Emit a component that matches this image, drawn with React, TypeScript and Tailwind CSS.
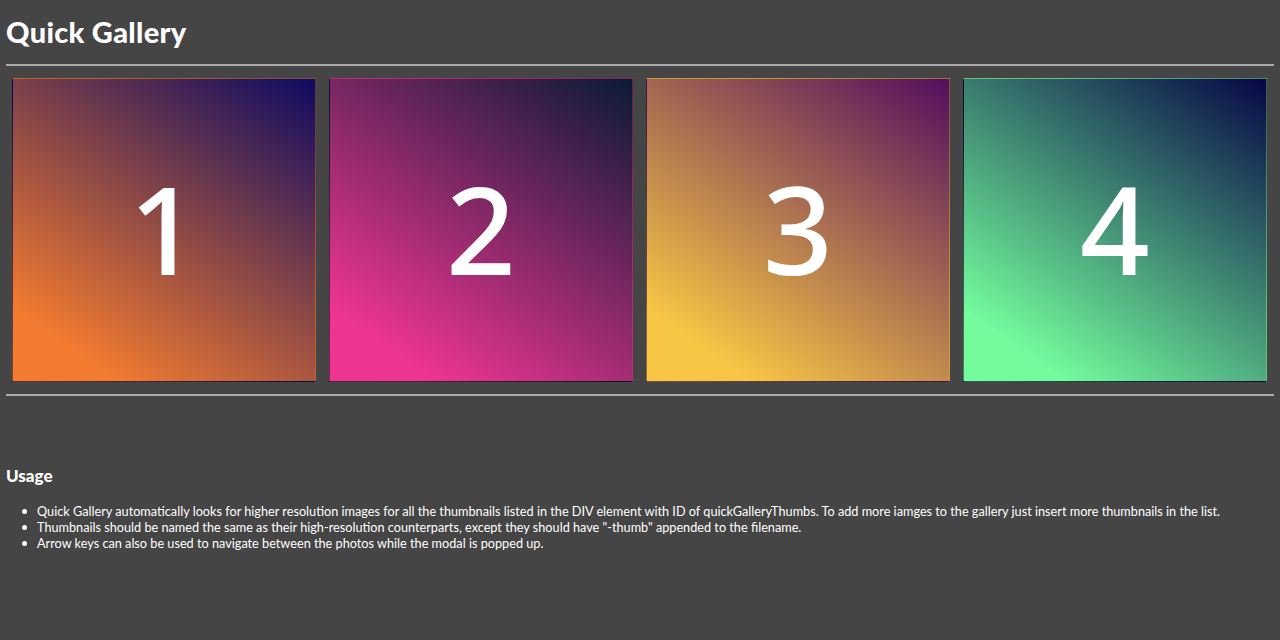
import React from "react";

const tiles = [
  { n: "1", bg: "linear-gradient(35deg, #f27b30 14%, #0e0a62 100%)" },
  { n: "2", bg: "linear-gradient(35deg, #ee3590 14%, #0a1a36 100%)" },
  { n: "3", bg: "linear-gradient(35deg, #f7c645 14%, #530e5e 100%)" },
  { n: "4", bg: "linear-gradient(35deg, #73fb9c 14%, #060645 100%)" },
];

const items = [
  "Quick Gallery automatically looks for higher resolution images for all the thumbnails listed in the DIV element with ID of quickGalleryThumbs. To add more iamges to the gallery just insert more thumbnails in the list.",
  'Thumbnails should be named the same as their high-resolution counterparts, except they should have "-thumb" appended to the filename.',
  "Arrow keys can also be used to navigate between the photos while the modal is popped up.",
];

export default function App() {
  return (
    <div className="min-h-[640px] w-full bg-[#454545] px-[6px] pt-[14px] text-white" style={{ fontFamily: 'Lato, "Noto Sans", sans-serif' }}>
      <h1 className="text-[29px] font-black leading-[36px] tracking-[0.3px]">Quick Gallery</h1>
      <div className="mt-[14px] h-[2px] w-full bg-[#ababab]" />
      <div className="flex gap-[13px] px-[6px] pt-[12px] pb-[12px]">
        {tiles.map((t) => (
          <div
            key={t.n}
            className="flex h-[304px] w-[304px] items-center justify-center border border-black/20"
            style={{ background: t.bg }}
          >
            <span className="-mt-[4px] text-[122px] font-medium leading-none text-white" style={{ fontFamily: '"Noto Sans", sans-serif' }}>{t.n}</span>
          </div>
        ))}
      </div>
      <div className="h-[2px] w-full bg-[#ababab]" />
      <h2 className="mt-[70px] text-[17px] font-black leading-[20px]">Usage</h2>
      <ul className="mt-[17px] flex flex-col pl-[16px] text-[12.7px] leading-[16px]">
        {items.map((s) => (
          <li key={s} className="flex items-center gap-[10px]">
            <span className="h-[5px] w-[5px] shrink-0 rounded-full bg-white" />
            <span>{s}</span>
          </li>
        ))}
      </ul>
    </div>
  );
}
